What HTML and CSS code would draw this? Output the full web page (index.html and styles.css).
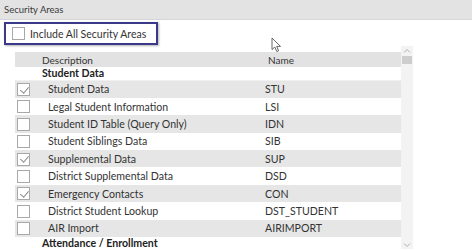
FILE: index.html
```html
<!DOCTYPE html>
<html>
<head>
<meta charset="utf-8">
<link rel="stylesheet" href="styles.css">
</head>
<body>
<div class="page">
  <div class="section-bar">Security Areas</div>
  <div class="include-box">
    <span class="cb"></span>
    <span class="include-label">Include All Security Areas</span>
  </div>
  <div class="grid-area">
    <div class="grid">
      <div class="row head"><span class="c-desc">Description</span><span class="c-name">Name</span></div>
      <div class="row group"><span class="c-desc">Student Data</span></div>
      <div class="row odd"><span class="cb checked"></span><span class="c-desc">Student Data</span><span class="c-name">STU</span></div>
      <div class="row"><span class="cb"></span><span class="c-desc">Legal Student Information</span><span class="c-name">LSI</span></div>
      <div class="row odd"><span class="cb"></span><span class="c-desc">Student ID Table (Query Only)</span><span class="c-name">IDN</span></div>
      <div class="row"><span class="cb"></span><span class="c-desc">Student Siblings Data</span><span class="c-name">SIB</span></div>
      <div class="row odd"><span class="cb checked"></span><span class="c-desc">Supplemental Data</span><span class="c-name">SUP</span></div>
      <div class="row"><span class="cb"></span><span class="c-desc">District Supplemental Data</span><span class="c-name">DSD</span></div>
      <div class="row odd"><span class="cb checked"></span><span class="c-desc">Emergency Contacts</span><span class="c-name">CON</span></div>
      <div class="row"><span class="cb"></span><span class="c-desc">District Student Lookup</span><span class="c-name">DST_STUDENT</span></div>
      <div class="row odd"><span class="cb"></span><span class="c-desc">AIR Import</span><span class="c-name">AIRIMPORT</span></div>
      <div class="row group"><span class="c-desc">Attendance / Enrollment</span></div>
    </div>
    <div class="scrollbar">
      <svg class="arrow" width="12" height="8" viewBox="0 0 12 8"><path d="M3 5.5 L6 2.5 L9 5.5" fill="none" stroke="#b0b0b0" stroke-width="1"/></svg>
      <div class="thumb"></div>
      <div class="track"></div>
      <svg class="arrow" width="12" height="8" viewBox="0 0 12 8"><path d="M3 2.5 L6 5.5 L9 2.5" fill="none" stroke="#b0b0b0" stroke-width="1"/></svg>
    </div>
  </div>
  <svg class="cursor" width="12" height="16" viewBox="0 0 12 16"><path d="M1 1 L1 12.5 L3.8 10 L5.8 14.5 L7.6 13.7 L5.7 9.4 L9.5 9.4 Z" fill="#fff" stroke="#555" stroke-width="0.9" stroke-linejoin="round"/></svg>
</div>
</body>
</html>
```
FILE: styles.css
```css
html, body {
  margin: 0;
  padding: 0;
  background: #fff;
}
.page {
  position: relative;
  width: 474px;
  height: 250px;
  overflow: hidden;
  font-family: "Lato", "Open Sans", sans-serif;
  color: #333;
}
.section-bar {
  height: 19px;
  margin-right: 2px;
  background: #e3e3e3;
  border-bottom: 1px solid #d6d6d6;
  font-size: 9.5px;
  line-height: 19px;
  padding-left: 4px;
  color: #3a3a3a;
}
.include-box {
  display: inline-flex;
  align-items: center;
  gap: 5px;
  margin: 2px 0 0 4px;
  height: 19px;
  width: 144px;
  padding: 0 0 0 6px;
  border: 2px solid #3b3a8a;
  box-shadow: 1px 1px 2px rgba(0,0,0,0.3);
}
.include-label {
  font-size: 10.5px;
  color: #333;
}
.cb {
  display: inline-block;
  box-sizing: border-box;
  width: 13px;
  height: 13px;
  border: 1px solid #a8a8a8;
  background: #fff;
  position: relative;
  flex: none;
}
.cb.checked::after {
  content: "";
  position: absolute;
  left: 3.5px;
  top: 0.5px;
  width: 3.5px;
  height: 7px;
  border-right: 1px solid #8a8a8a;
  border-bottom: 1px solid #8a8a8a;
  transform: rotate(40deg);
}
.grid-area {
  display: flex;
  align-items: flex-start;
  margin: 1px 0 0 15px;
}
.grid {
  width: 386px;
  margin-top: 6px;
  font-size: 10.6px;
}
.row {
  display: flex;
  align-items: center;
  height: 17.4px;
  position: relative;
  background: #fff;
}
.row.odd {
  background: #e6e6e6;
}
.row .cb {
  position: absolute;
  left: 2px;
  top: 2.5px;
}
.row .c-desc {
  position: absolute;
  left: 33px;
}
.row .c-name {
  position: absolute;
  left: 250px;
}
.row.head {
  height: 15px;
  background: #e2e2e2;
  font-size: 10px;
}
.row.head .c-desc {
  left: 27px;
}
.row.head .c-name {
  left: 253px;
}
.row.group {
  height: 12.5px;
  font-weight: 700;
  color: #222;
  border-bottom: 1px solid #f0f0f0;
}
.row.group .c-desc {
  left: 27px;
}
.scrollbar {
  width: 12px;
  height: 203px;
  background: #f3f3f3;
  display: flex;
  flex-direction: column;
  align-items: center;
}
.arrow {
  flex: none;
  margin-top: 1px;
}
.thumb {
  width: 10px;
  height: 8px;
  background: #cdcdcd;
  margin-top: 1px;
}
.track {
  flex: 1;
}
.cursor {
  position: absolute;
  left: 271px;
  top: 37px;
}
```
